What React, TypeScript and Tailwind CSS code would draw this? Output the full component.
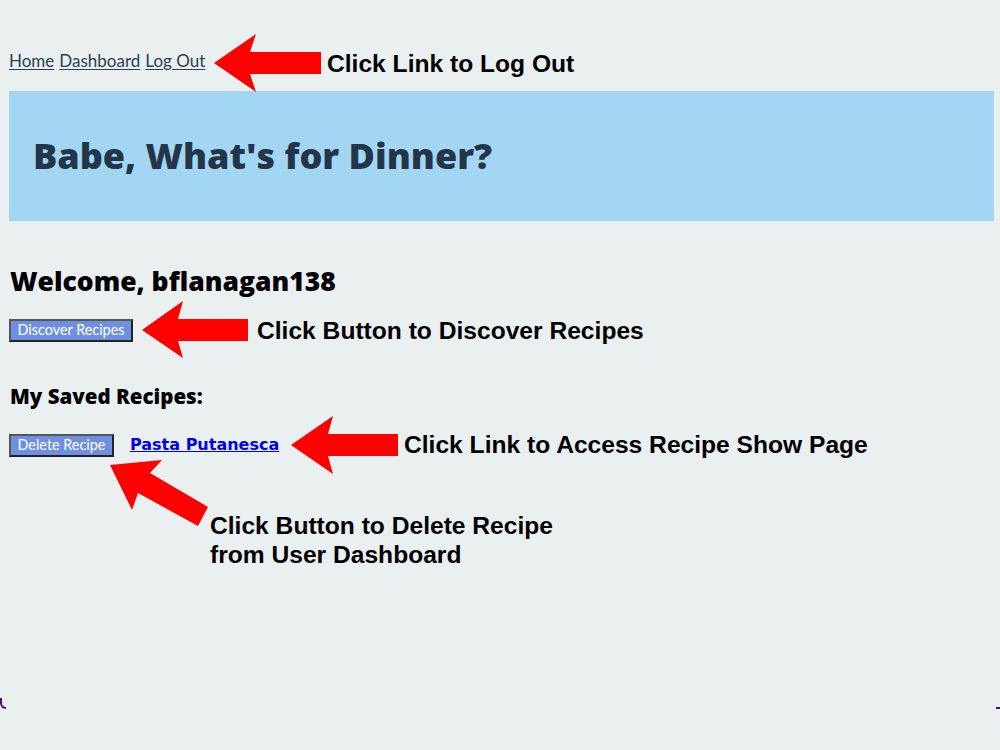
const sans = { fontFamily: 'Lato, "Open Sans", sans-serif' };
const heavy = { fontFamily: '"Open Sans", Lato, sans-serif' };

export default function App() {
  return (
    <div className="relative min-h-[750px] w-[1000px] overflow-hidden bg-[#eaf0f0] text-[#2c3e50]" style={sans}>
      <div className="pl-[9px] pt-[49px]">
        {/* nav */}
        <nav className="flex gap-[5px] text-[17px] leading-[24px]">
          <a href="#" className="underline underline-offset-2">Home</a>
          <a href="#" className="underline underline-offset-2">Dashboard</a>
          <a href="#" className="underline underline-offset-2">Log Out</a>
        </nav>

        {/* banner */}
        <header className="mt-[18px] flex h-[130px] w-[985px] items-center bg-[#a3d6f3] pl-[24px]">
          <h1 className="text-[36px] font-extrabold leading-none text-[#233649]" style={heavy}>Babe, What's for Dinner?</h1>
        </header>

        <main className="pt-[44px] text-black">
          <h2 className="pl-px text-[26.5px] font-extrabold leading-[32px]" style={heavy}>Welcome, bflanagan138</h2>
          <button className="mt-[22px] h-[23px] w-[124px] border-2 border-t-[#555] border-l-[#555] border-b-[#222] border-r-[#222] bg-[#6f8fe0] text-[14.4px] leading-none text-white">
            Discover Recipes
          </button>

          <h3 className="mt-[42px] pl-px text-[20.5px] font-extrabold leading-[24px]" style={heavy}>My Saved Recipes:</h3>
          <div className="mt-[25px] flex items-center gap-[16px]">
            <button className="h-[23px] w-[105px] border-2 border-t-[#555] border-l-[#555] border-b-[#222] border-r-[#222] bg-[#6f8fe0] text-[14.4px] leading-none text-white">
              Delete Recipe
            </button>
            <a href="#" className="text-[16px] font-bold text-[#0000ee] underline" style={{ fontFamily: '"DejaVu Sans", Verdana, sans-serif' }}>
              Pasta Putanesca
            </a>
          </div>
        </main>
      </div>

      {/* annotation arrows */}
      <svg className="pointer-events-none absolute left-0 top-0" width="1000" height="750">
        <polygon fill="#ff0000" points="214,63 256,34 250,52 321,52 321,74 250,74 256,92" />
        <polygon fill="#ff0000" points="142,330 183,301 178,319 248,319 248,341 178,341 183,358" />
        <polygon fill="#ff0000" points="291,445 333,416 328,434 398,434 398,456 328,456 333,474" />
        <polygon fill="#ff0000" points="110,465 162,460 150,473 208,507 198,526 138,493 132,510" />
      </svg>

      {/* annotation labels */}
      <div className="absolute inset-0 text-[24.6px] font-bold leading-[29px] text-black" style={{ fontFamily: '"Liberation Sans", Arial, sans-serif' }}>
        <p className="absolute left-[327px] top-[49px]">Click Link to Log Out</p>
        <p className="absolute left-[257px] top-[316px]">Click Button to Discover Recipes</p>
        <p className="absolute left-[404px] top-[430px]">Click Link to Access Recipe Show Page</p>
        <p className="absolute left-[210px] top-[511px]">
          Click Button to Delete Recipe
          <br />
          from User Dashboard
        </p>
      </div>

      {/* window corner remnants */}
      <div className="absolute left-0 top-[698px] h-[11px] w-[6px] rounded-bl-[6px] border-b-2 border-l-2 border-[#3b1a6b]" />
      <div className="absolute right-0 top-[707px] h-[2px] w-[4px] bg-[#3b1a6b]" />
    </div>
  );
}
